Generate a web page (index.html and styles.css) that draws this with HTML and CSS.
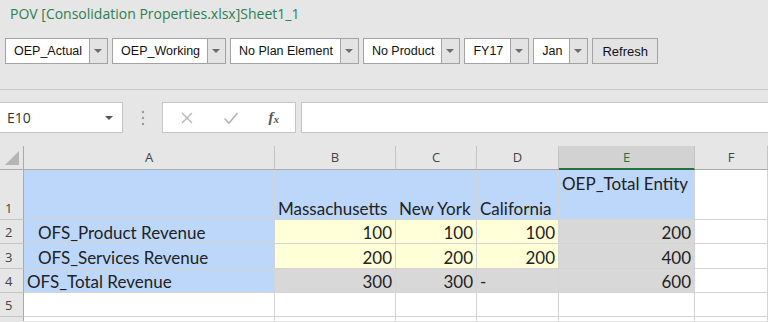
FILE: index.html
```html
<!DOCTYPE html>
<html lang="en">
<head>
    <meta charset="UTF-8">
    <title>POV Sheet1_1</title>
    <link rel="stylesheet" href="styles.css">
</head>
<body>
    <!-- POV toolbar -->
    <div class="pov">
        <div class="pov-title">POV [Consolidation Properties.xlsx]Sheet1_1</div>
        <div class="pov-bar">
            <div class="dd"><span class="dd-text">OEP_Actual</span><span class="dd-arrow"></span></div>
            <div class="dd"><span class="dd-text">OEP_Working</span><span class="dd-arrow"></span></div>
            <div class="dd"><span class="dd-text">No Plan Element</span><span class="dd-arrow"></span></div>
            <div class="dd"><span class="dd-text">No Product</span><span class="dd-arrow"></span></div>
            <div class="dd"><span class="dd-text">FY17</span><span class="dd-arrow"></span></div>
            <div class="dd"><span class="dd-text">Jan</span><span class="dd-arrow"></span></div>
            <button class="refresh">Refresh</button>
        </div>
    </div>

    <!-- Formula bar -->
    <div class="formula-bar">
        <div class="name-box">
            <span>E10</span>
            <span class="name-arrow"></span>
        </div>
        <div class="grip">
            <svg width="4" height="16" viewBox="0 0 4 16"><circle cx="2" cy="2" r="1.2" fill="#9a9a9a"/><circle cx="2" cy="8" r="1.2" fill="#9a9a9a"/><circle cx="2" cy="14" r="1.2" fill="#9a9a9a"/></svg>
        </div>
        <div class="fx-box">
            <svg width="14" height="14" viewBox="0 0 14 14"><path d="M2 2 L12 12 M12 2 L2 12" stroke="#b4b4b4" stroke-width="1.3" fill="none"/></svg>
            <svg width="16" height="14" viewBox="0 0 16 14"><path d="M1.5 7.5 L6 12 L14.5 2" stroke="#b4b4b4" stroke-width="1.6" fill="none"/></svg>
            <span class="fx"><i>f</i><sub>x</sub></span>
        </div>
        <div class="formula-input"></div>
    </div>

    <!-- Sheet grid -->
    <div class="sheet">
        <div class="hd corner"><span class="corner-tri"></span></div>
        <div class="hd">A</div>
        <div class="hd">B</div>
        <div class="hd">C</div>
        <div class="hd">D</div>
        <div class="hd hd-sel">E</div>
        <div class="hd">F</div>

        <div class="rn">1</div>
        <div class="c blue"></div>
        <div class="c blue">Massachusetts</div>
        <div class="c blue">New York</div>
        <div class="c blue">California</div>
        <div class="c blue top">OEP_Total Entity</div>
        <div class="c"></div>

        <div class="rn">2</div>
        <div class="c blue indent">OFS_Product Revenue</div>
        <div class="c yellow num">100</div>
        <div class="c yellow num">100</div>
        <div class="c yellow num">100</div>
        <div class="c gray num">200</div>
        <div class="c"></div>

        <div class="rn">3</div>
        <div class="c blue indent">OFS_Services Revenue</div>
        <div class="c yellow num">200</div>
        <div class="c yellow num">200</div>
        <div class="c yellow num">200</div>
        <div class="c gray num">400</div>
        <div class="c"></div>

        <div class="rn">4</div>
        <div class="c blue">OFS_Total Revenue</div>
        <div class="c gray num">300</div>
        <div class="c gray num">300</div>
        <div class="c gray">-</div>
        <div class="c gray num">600</div>
        <div class="c"></div>

        <div class="rn">5</div>
        <div class="c"></div>
        <div class="c"></div>
        <div class="c"></div>
        <div class="c"></div>
        <div class="c"></div>
        <div class="c"></div>

        <div class="rn"></div>
        <div class="c"></div>
        <div class="c"></div>
        <div class="c"></div>
        <div class="c"></div>
        <div class="c"></div>
        <div class="c"></div>
    </div>
</body>
</html>
```

FILE: styles.css
```css
body {
    margin: 0;
    height: 322px;
    background-color: #e6e6e6;
    font-family: "Liberation Sans", Arial, sans-serif;
    overflow: hidden;
}

/* POV toolbar */
.pov {
    height: 90px;
    border-bottom: 1px solid #cacaca;
    box-sizing: border-box;
}

.pov-title {
    padding-left: 10px;
    height: 30px;
    line-height: 28px;
    font-family: "Open Sans", sans-serif;
    font-size: 14px;
    color: #2d8050;
}

.pov-bar {
    display: flex;
    gap: 4px;
    padding-left: 5px;
    margin-top: 8px;
}

.dd {
    display: flex;
    height: 26px;
    border: 1px solid #a3a3a3;
    box-sizing: border-box;
    background-color: #fff;
}

.dd-text {
    padding: 0 7px 0 8px;
    line-height: 24px;
    font-size: 12.5px;
    color: #111;
}

.dd-arrow {
    width: 17px;
    border-left: 1px solid #a3a3a3;
    background-color: #e3e3e3;
    position: relative;
}

.dd-arrow::after {
    content: "";
    position: absolute;
    left: 4px;
    top: 10px;
    border-left: 4px solid transparent;
    border-right: 4px solid transparent;
    border-top: 4px solid #6d6d6d;
}

.refresh {
    height: 26px;
    padding: 0 9px;
    border: 1px solid #a3a3a3;
    background-color: #e3e3e3;
    font-family: "Liberation Sans", Arial, sans-serif;
    font-size: 13px;
    color: #111;
}

/* Formula bar */
.formula-bar {
    display: flex;
    align-items: center;
    margin-top: 12px;
    height: 31px;
}

.name-box {
    width: 123px;
    height: 31px;
    box-sizing: border-box;
    border: 1px solid #c6c6c6;
    border-left: none;
    background-color: #fff;
    display: flex;
    align-items: center;
    justify-content: space-between;
    padding: 0 9px 0 7px;
    font-family: "Open Sans", sans-serif;
    font-size: 14px;
    color: #333;
}

.name-arrow {
    border-left: 4px solid transparent;
    border-right: 4px solid transparent;
    border-top: 4px solid #555;
}

.grip {
    width: 39px;
    display: flex;
    justify-content: center;
}

.fx-box {
    width: 134px;
    height: 31px;
    box-sizing: border-box;
    border: 1px solid #c6c6c6;
    background-color: #fff;
    display: flex;
    align-items: center;
    justify-content: space-between;
    padding: 0 16px 0 17px;
}

.fx {
    font-family: "Liberation Serif", serif;
    font-size: 15px;
    color: #555;
    font-weight: bold;
}

.fx sub {
    font-size: 11px;
    font-style: italic;
    vertical-align: -1px;
}

.formula-input {
    flex: 1;
    height: 31px;
    box-sizing: border-box;
    margin-left: 5px;
    border: 1px solid #c6c6c6;
    border-right: none;
    background-color: #fff;
}

/* Sheet grid */
.sheet {
    display: grid;
    grid-template-columns: 24px 251px 121px 81px 82px 136px 1fr;
    grid-template-rows: 24px 50px 24px 25px 24px 24px 24px;
    height: 175px;
    overflow: hidden;
    margin-top: 13px;
    background-color: #fff;
}

.hd {
    background-color: #e6e6e6;
    border-right: 1px solid #c4c4c4;
    border-bottom: 1px solid #ababab;
    text-align: center;
    line-height: 23px;
    font-family: "Open Sans", sans-serif;
    font-size: 13px;
    color: #444;
}

.corner {
    position: relative;
    border-right-color: #ababab;
}

.corner-tri {
    position: absolute;
    right: 4px;
    bottom: 4px;
    border-left: 14px solid transparent;
    border-bottom: 14px solid #b5b5b5;
}

.hd-sel {
    background-color: #d2d2d2;
    color: #217346;
    border-bottom: 2px solid #217346;
    line-height: 22px;
}

.rn {
    background-color: #e6e6e6;
    border-right: 1px solid #ababab;
    border-bottom: 1px solid #c4c4c4;
    padding-left: 5px;
    font-family: "Open Sans", sans-serif;
    font-size: 13px;
    color: #444;
    display: flex;
    align-items: flex-end;
    line-height: 21px;
}

.c {
    border-right: 1px solid #d4d4d4;
    border-bottom: 1px solid #d4d4d4;
    padding: 0 3px;
    font-family: Lato, sans-serif;
    font-size: 17px;
    color: #222;
    line-height: 20px;
    white-space: nowrap;
    display: flex;
    align-items: flex-end;
}

.top {
    align-items: flex-start;
    line-height: 28px;
}

.num {
    justify-content: flex-end;
}

.indent {
    padding-left: 14px;
}

.blue {
    background-color: #bdd7fb;
}

.yellow {
    background-color: #ffffd8;
}

.gray {
    background-color: #d8d8d8;
}
```
